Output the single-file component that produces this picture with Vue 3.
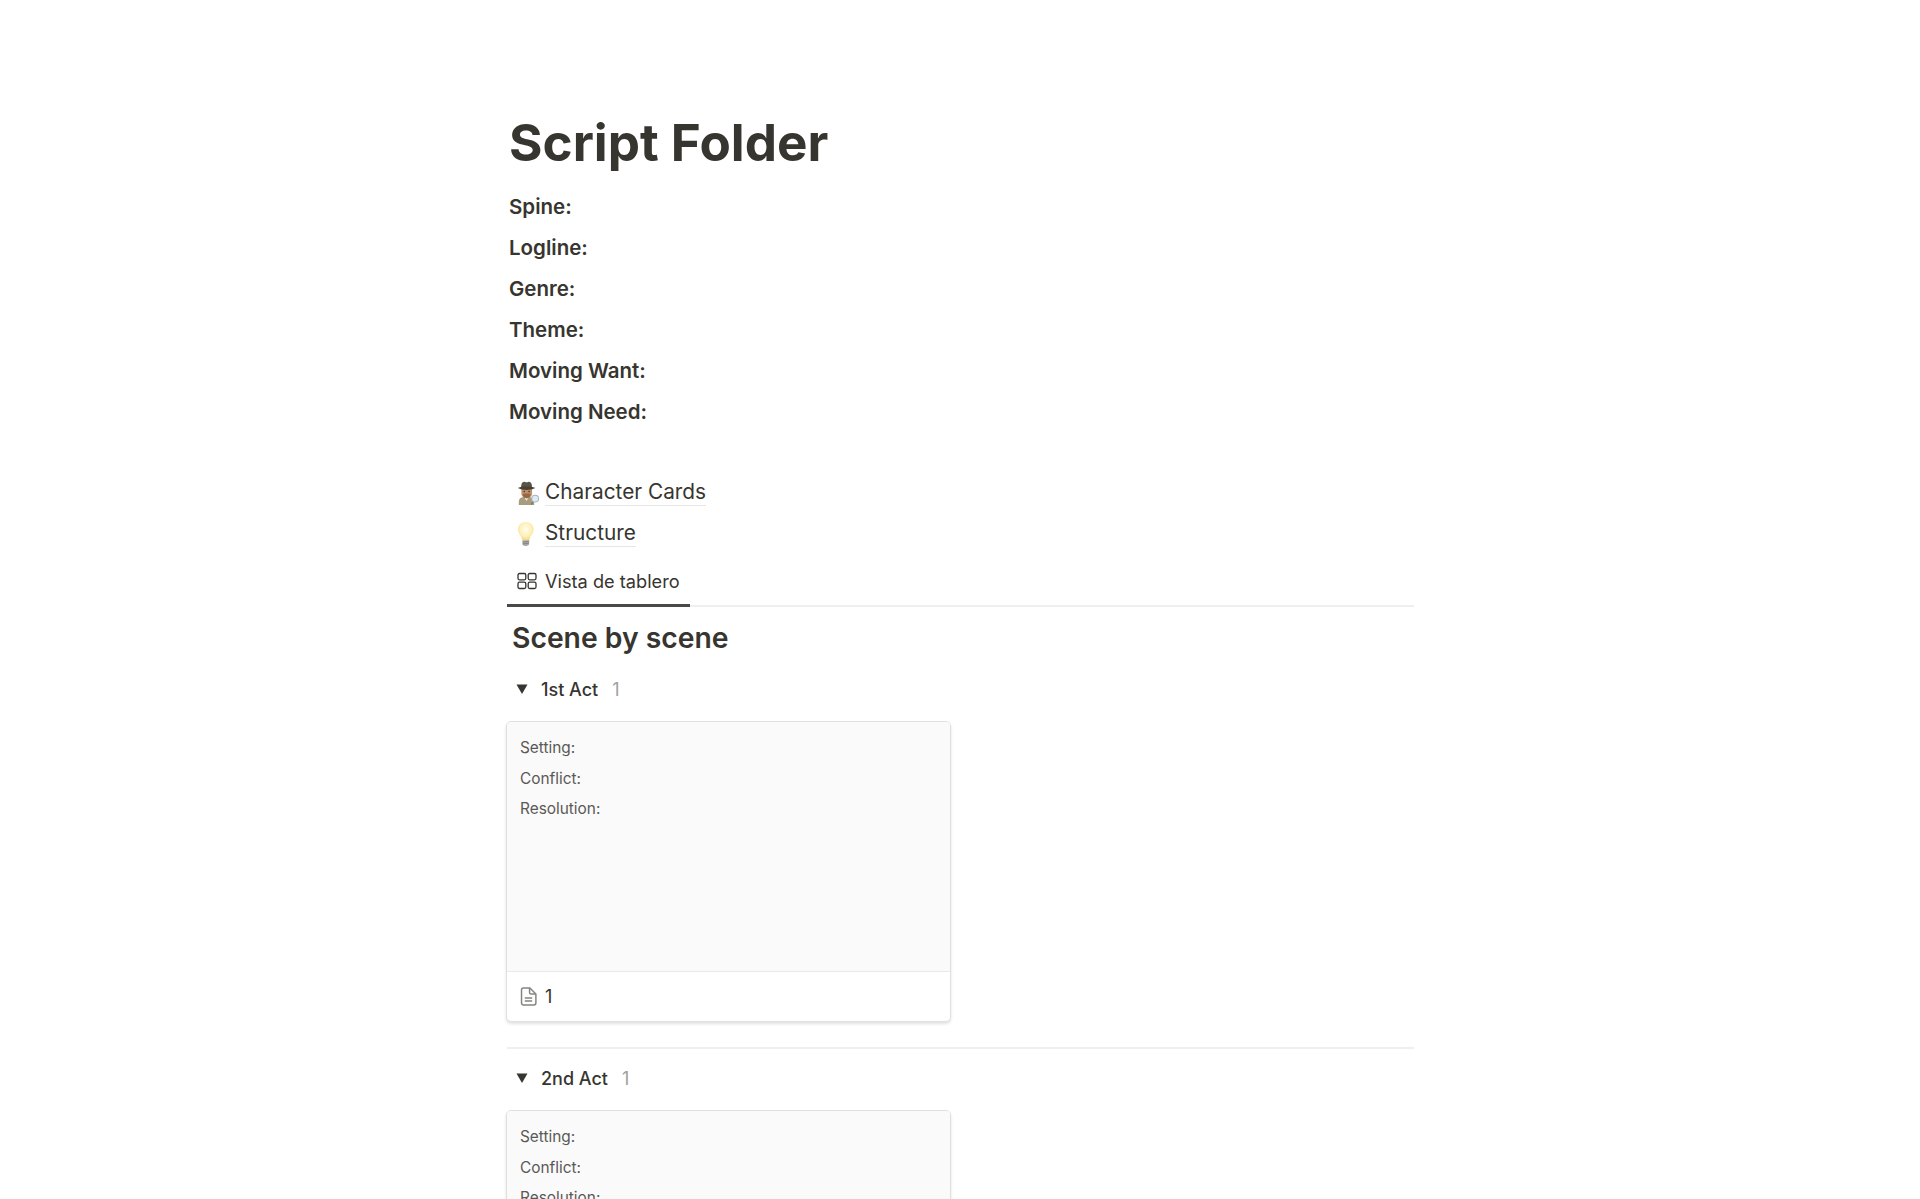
<script setup>
const fields = ['Spine:', 'Logline:', 'Genre:', 'Theme:', 'Moving Want:', 'Moving Need:']
const acts = [
  { name: '1st Act', count: 1 },
  { name: '2nd Act', count: 1 }
]
const cardLines = ['Setting:', 'Conflict:', 'Resolution:']
</script>

<template>
  <div class="page">
    <main class="content">
      <h1 class="title">Script Folder</h1>

      <div class="fields">
        <p v-for="f in fields" :key="f" class="field">{{ f }}</p>
      </div>

      <div class="links">
        <div class="link">
          <svg class="emoji" viewBox="2.500 0.500 21 23.500">
            <path d="M4 24v-3.500c0-2.500 2-4 4.500-4.300h6c2.500.3 4.500 1.800 4.500 4.300V24z" fill="#a89c7e"/>
            <path d="M9 16.200l2.500 4 2.500-4z" fill="#ece6d6"/>
            <path d="M6.500 8h10.500v4.500c0 3-2.300 4.800-5.200 4.800s-5.300-1.800-5.300-4.800z" fill="#c08e68"/>
            <path d="M7.800 13.400c1.400-.8 2.700-.8 3.900-.3 1.300-.5 2.600-.5 3.900.3-.3 2.400-1.900 3.900-3.900 3.900s-3.600-1.500-3.900-3.900z" fill="#96674a"/>
            <path d="M6.600 3.800C7 1.800 8.600 1 10 1.400c1.100.4 2 .4 3.200 0 1.500-.4 3 .4 3.400 2.400l.5 3.200H6.100z" fill="#5a5447"/>
            <path d="M3 7.400c2.500-1 5.500-1.400 8.600-1.400s6.100.4 8.600 1.400c-2.400 1.300-5.400 1.900-8.600 1.900S5.400 8.700 3 7.400z" fill="#474238"/>
            <circle cx="9.300" cy="10.800" r=".7" fill="#33251b"/>
            <circle cx="14" cy="10.800" r=".7" fill="#33251b"/>
            <path d="M16.500 23l2-3" stroke="#8a7a60" stroke-width="1.600" stroke-linecap="round"/>
            <circle cx="20" cy="17.800" r="3.300" fill="#dfeaf3" stroke="#a3b5c2" stroke-width="1"/>
          </svg>
          <span class="link-text">Character Cards</span>
        </div>
        <div class="link">
          <svg class="emoji" viewBox="4 1 20 21.600">
            <defs>
              <radialGradient id="bulb" cx="50%" cy="40%" r="60%">
                <stop offset="0%" stop-color="#fffdf0"/>
                <stop offset="65%" stop-color="#fdf0b8"/>
                <stop offset="100%" stop-color="#f3d77e"/>
              </radialGradient>
            </defs>
            <path d="M12 1c-4.200 0-7 3-7 6.800 0 2.300 1 3.800 2.100 5.400.9 1.300 1.500 2.600 1.700 4.300h6.400c.2-1.700.8-3 1.700-4.300C18 11.600 19 10.100 19 7.800 19 4 16.200 1 12 1z" fill="url(#bulb)"/>
            <path d="M9 17.500h6v3.300c0 .8-.8 1.300-1.500 1.400-.3.9-2.700.9-3 0-.7-.1-1.500-.6-1.500-1.400z" fill="#a9a9a6"/>
            <path d="M9 19.200l6-.8M9 20.900l6-.8" stroke="#73736f" stroke-width=".6"/>
          </svg>
          <span class="link-text">Structure</span>
        </div>
      </div>

      <div class="tabs">
        <div class="tab">
          <svg class="tab-icon" viewBox="0 0 20 20" fill="none" stroke="#37352f" stroke-width="1.300">
            <rect x="1" y="2.500" width="7.800" height="6.300" rx="1.500"/>
            <rect x="11.200" y="2.500" width="7.800" height="6.300" rx="1.500"/>
            <rect x="1" y="11.200" width="7.800" height="6.300" rx="1.500"/>
            <rect x="11.200" y="11.200" width="7.800" height="6.300" rx="1.500"/>
          </svg>
          <span>Vista de tablero</span>
        </div>
      </div>

      <h2 class="board-title">Scene by scene</h2>

      <section v-for="(act, i) in acts" :key="act.name" class="group" :class="{ ruled: i > 0 }">
        <div class="group-head">
          <svg class="caret" viewBox="0 0 12 12"><path d="M.5 1.500h11L6 11z" fill="#37352f"/></svg>
          <span class="group-name">{{ act.name }}</span>
          <span class="group-count">{{ act.count }}</span>
        </div>
        <article class="card">
          <div class="card-cover">
            <p v-for="line in cardLines" :key="line" class="card-line">{{ line }}</p>
          </div>
          <div class="card-foot">
            <svg class="doc" viewBox="0 0 16 18" fill="none" stroke="#85847f" stroke-width="1.400">
              <path d="M3.200 1h6.100L15 6.700v8.500c0 1-.8 1.800-1.800 1.800h-10c-1 0-1.800-.8-1.800-1.800V2.800C1.400 1.800 2.200 1 3.200 1z"/>
              <path d="M9 1.200v4c0 .9.600 1.500 1.500 1.500h4.300"/>
              <path d="M4.500 10.500h7M4.500 13.300h7"/>
            </svg>
            <span>1</span>
          </div>
        </article>
      </section>
    </main>
  </div>
</template>

<style scoped>
* {
  box-sizing: border-box;
  margin: 0;
  padding: 0;
}

.page {
  height: 1199px;
  overflow: hidden;
  background: #fff;
  color: #37352f;
  font-family: Inter, "Noto Sans", sans-serif;
  display: flex;
  justify-content: center;
}

.content {
  width: 907px;
  margin-left: 1px;
  padding-top: 112px;
}

.title {
  font-size: 51.200px;
  line-height: 60px;
  font-weight: 700;
  padding-left: 2px;
}

.fields {
  margin-top: 14px;
  padding-left: 2px;
}

.field {
  font-size: 20.500px;
  font-weight: 600;
  line-height: 41px;
}

.links {
  margin-top: 40px;
  padding-left: 10px;
}

.link {
  height: 41px;
  display: flex;
  align-items: center;
  gap: 6px;
  font-size: 20.800px;
  line-height: 26px;
}

.emoji {
  width: 22px;
  height: 24px;
  flex: none;
}

.link-text {
  border-bottom: 1px solid #e6e6e4;
}

.tabs {
  height: 48px;
  border-bottom: 2px solid #efefee;
  margin-top: 5px;
}

.tab {
  width: 183px;
  height: 48px;
  border-bottom: 3px solid #4a4945;
  display: flex;
  align-items: center;
  gap: 8px;
  padding-left: 10px;
  padding-bottom: 2px;
  font-size: 18.200px;
}

.tab-icon {
  width: 20px;
  height: 20px;
  flex: none;
}

.board-title {
  font-size: 28.300px;
  line-height: 36px;
  font-weight: 600;
  padding-left: 5px;
  margin-top: 13px;
}

.group {
  padding-top: 15px;
  padding-bottom: 25px;
}

.group.ruled {
  border-top: 2px solid #efefee;
  padding-top: 11px;
}

.group-head {
  height: 36px;
  display: flex;
  align-items: center;
  font-size: 18px;
  font-weight: 450;
  padding-left: 9px;
}

.caret {
  width: 12px;
  height: 12px;
  flex: none;
  margin-right: 13px;
}

.group-count {
  margin-left: 14px;
  color: #a0a09d;
  font-weight: 400;
}

.card {
  width: 445px;
  height: 301px;
  margin-top: 14px;
  margin-left: -1px;
  border: 1px solid #e0e0de;
  border-radius: 5px;
  box-shadow: 0 2px 3px rgba(15, 15, 15, 0.12);
  overflow: hidden;
  background: #fff;
}

.card-cover {
  height: 250px;
  background: #fafafa;
  border-bottom: 1px solid #e9e9e8;
  padding: 11px 13px 0;
}

.card-line {
  font-size: 15.400px;
  line-height: 30.500px;
  color: #5a5955;
}

.card-foot {
  height: 50px;
  display: flex;
  align-items: center;
  gap: 8px;
  padding-left: 13px;
  padding-bottom: 2px;
  font-size: 18px;
}

.doc {
  width: 17px;
  height: 19px;
  flex: none;
}
</style>

<style>
html,
body {
  margin: 0;
  overflow: hidden;
  background: #fff;
}
</style>
